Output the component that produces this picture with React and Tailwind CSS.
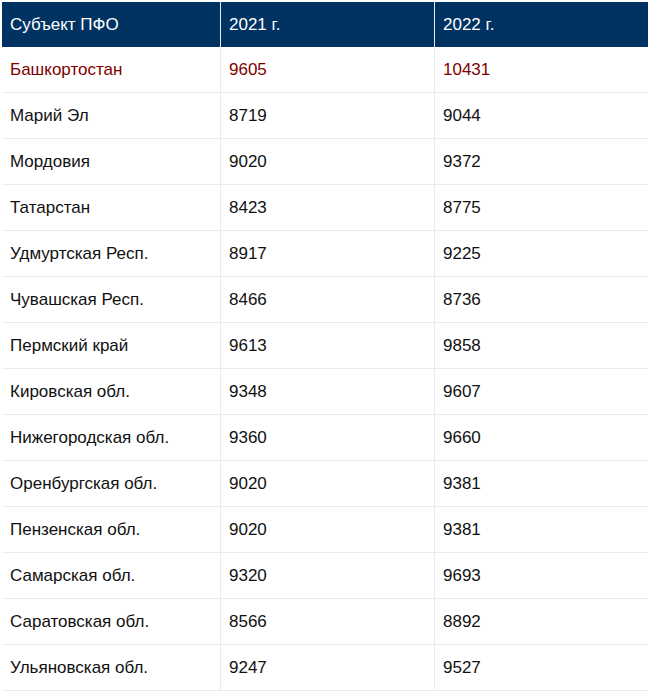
import React from "react";

const rows = [
  ["Башкортостан", "9605", "10431", true],
  ["Марий Эл", "8719", "9044"],
  ["Мордовия", "9020", "9372"],
  ["Татарстан", "8423", "8775"],
  ["Удмуртская Респ.", "8917", "9225"],
  ["Чувашская Респ.", "8466", "8736"],
  ["Пермский край", "9613", "9858"],
  ["Кировская обл.", "9348", "9607"],
  ["Нижегородская обл.", "9360", "9660"],
  ["Оренбургская обл.", "9020", "9381"],
  ["Пензенская обл.", "9020", "9381"],
  ["Самарская обл.", "9320", "9693"],
  ["Саратовская обл.", "8566", "8892"],
  ["Ульяновская обл.", "9247", "9527"],
];

export default function App() {
  return (
    <div className="w-[650px] h-[693px] bg-white pt-[2px] pl-[2px] font-['Liberation_Sans',Arial,sans-serif] text-[17px] leading-[20px]">
      <div className="w-[646px]">
        <div className="flex h-[45px] bg-[#003362] text-white">
          <div className="w-[219px] border-r border-[#e6ebf0] pl-[8px] flex items-center">Субъект ПФО</div>
          <div className="w-[214px] border-r border-[#e6ebf0] pl-[8px] flex items-center">2021 г.</div>
          <div className="w-[213px] pl-[8px] flex items-center">2022 г.</div>
        </div>
        {rows.map(([name, a, b, red]) => (
          <div
            key={name}
            className={`flex h-[46px] border-b border-[#ebebeb] ${red ? "text-[#800000]" : "text-[#111111]"}`}
          >
            <div className="w-[219px] border-r border-[#ebebeb] pl-[8px] pt-[1px] flex items-center">{name}</div>
            <div className="w-[214px] border-r border-[#ebebeb] pl-[8px] pt-[1px] flex items-center">{a}</div>
            <div className="w-[213px] pl-[8px] pt-[1px] flex items-center">{b}</div>
          </div>
        ))}
      </div>
    </div>
  );
}
